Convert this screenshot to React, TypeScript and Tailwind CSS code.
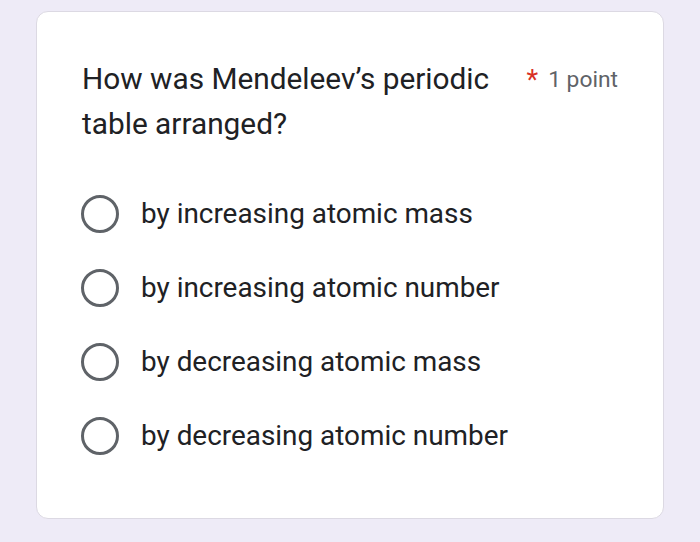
const options = [
  "by increasing atomic mass",
  "by increasing atomic number",
  "by decreasing atomic mass",
  "by decreasing atomic number",
];

export default function App() {
  return (
    <div
      className="w-[700px] h-[542px] bg-[#eeebf7] pt-[11px] pl-[36px]"
      style={{ fontFamily: "Roboto, 'Noto Sans', sans-serif" }}
    >
      <div className="w-[628px] h-[508px] bg-white rounded-[12px] border border-[#dcd9e3] pl-[44px] pr-[45px] pt-[44px]">
        <div className="flex items-start">
          <div className="ml-[1px] w-[430px] text-[29.8px] leading-[45px] text-[#202124]">
            How was Mendeleev’s periodic table arranged?
          </div>
          <div className="ml-auto flex items-baseline leading-[45px]">
            <span className="text-[27px] text-[#d93025] relative top-[2px]">*</span>
            <span className="ml-[10px] text-[22.8px] text-[#5f6368]">1 point</span>
          </div>
        </div>
        <div className="mt-[49px] flex flex-col gap-[37.3px]">
          {options.map((o) => (
            <div key={o} className="flex items-center h-[37px]">
              <div className="w-[38px] h-[38px] rounded-full border-[3.5px] border-[#5f6368]" />
              <span className="ml-[22px] text-[27.9px] text-[#202124]">{o}</span>
            </div>
          ))}
        </div>
      </div>
    </div>
  );
}
